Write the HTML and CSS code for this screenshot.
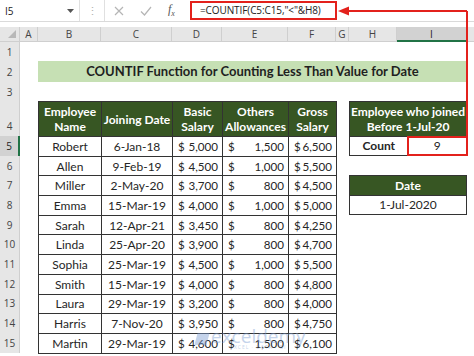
FILE: index.html
```html
<!DOCTYPE html>
<html lang="en">
<head>
    <meta charset="UTF-8">
    <meta name="viewport" content="width=device-width, initial-scale=1.0">
    <title>COUNTIF Less Than Date</title>
    <link rel="stylesheet" href="styles.css">
</head>
<body>
    <div class="formula-bar">
        <div class="name-box">
            <span>I5</span>
            <svg class="drop" width="7" height="4" viewBox="0 0 7 4"><path d="M0 0h7L3.5 4z" fill="#555"/></svg>
        </div>
        <div class="bar-dots">&#8942;</div>
        <div class="bar-icons">
            <svg width="10" height="10" viewBox="0 0 10 10"><path d="M1 1l8 8M9 1l-8 8" stroke="#b5b5b5" stroke-width="1.2"/></svg>
            <svg width="12" height="10" viewBox="0 0 12 10"><path d="M1 5.5l3.5 3.5L11 1" stroke="#b5b5b5" stroke-width="1.2" fill="none"/></svg>
            <span class="fx">f<sub>x</sub></span>
        </div>
        <div class="formula">=COUNTIF(C5:C15,"&lt;"&amp;H8)</div>
    </div>

    <div class="sheet">
        <div class="corner"><svg width="8" height="8" viewBox="0 0 8 8"><path d="M8 0v8H0z" fill="#b8b8b8"/></svg></div>
        <div class="ch">A</div>
        <div class="ch">B</div>
        <div class="ch">C</div>
        <div class="ch">D</div>
        <div class="ch">E</div>
        <div class="ch">F</div>
        <div class="ch">G</div>
        <div class="ch">H</div>
        <div class="ch active">I</div>
        <div class="ch last"></div>

        <div class="row-heads">
            <div class="rh">1</div>
            <div class="rh tall">2</div>
            <div class="rh">3</div>
            <div class="rh double">4</div>
            <div class="rh active">5</div>
            <div class="rh">6</div>
            <div class="rh">7</div>
            <div class="rh">8</div>
            <div class="rh">9</div>
            <div class="rh">10</div>
            <div class="rh">11</div>
            <div class="rh">12</div>
            <div class="rh">13</div>
            <div class="rh">14</div>
            <div class="rh">15</div>
        </div>

        <div class="title">COUNTIF Function for Counting Less Than Value for Date</div>

        <table class="data main">
            <colgroup>
                <col style="width:63px"><col style="width:71px"><col style="width:50px"><col style="width:66px"><col style="width:48px">
            </colgroup>
            <thead>
                <tr>
                    <th>Employee<br>Name</th>
                    <th>Joining Date</th>
                    <th>Basic<br>Salary</th>
                    <th>Others<br>Allowances</th>
                    <th>Gross<br>Salary</th>
                </tr>
            </thead>
            <tbody id="rows"></tbody>
        </table>

        <table class="data count">
            <tr><th colspan="2">Employee who joined<br>Before 1-Jul-20</th></tr>
            <tr><td class="label">Count</td><td class="result">9</td></tr>
        </table>

        <table class="data date">
            <tr><th colspan="2">Date</th></tr>
            <tr><td colspan="2">1-Jul-2020</td></tr>
        </table>
    </div>

    <div class="watermark">
        <span class="wm-logo"></span>
        <span class="wm-text">exceldemy<small>EXCEL · DATA · BI</small></span>
    </div>

    <svg class="arrow" width="474" height="160" viewBox="0 0 474 160">
        <path d="M467 11V136M467 11H348" stroke="#e3211c" stroke-width="2" fill="none"/>
        <path d="M338 11l11-4.5v9z" fill="#e3211c"/>
    </svg>

    <script>
        const employees = [
            ['Robert', '6-Jan-18', '5,000', '1,500', '6,500'],
            ['Allen', '9-Feb-19', '4,500', '1,000', '5,500'],
            ['Miller', '2-May-20', '3,700', '800', '4,500'],
            ['Emma', '15-Mar-19', '4,000', '1,000', '5,000'],
            ['Sarah', '12-Apr-21', '3,450', '800', '4,250'],
            ['Linda', '25-Apr-20', '3,900', '800', '4,700'],
            ['Sophia', '25-Mar-19', '4,500', '1,000', '5,500'],
            ['Smith', '15-Mar-19', '4,000', '800', '4,800'],
            ['Laura', '29-Mar-19', '3,200', '800', '4,000'],
            ['Harris', '7-Nov-20', '3,950', '800', '4,750'],
            ['Martin', '29-Mar-19', '4,600', '1,500', '6,100']
        ];

        const tbody = document.getElementById('rows');
        employees.forEach(emp => {
            const tr = document.createElement('tr');
            emp.forEach((value, i) => {
                const td = document.createElement('td');
                if (i >= 2) {
                    td.innerHTML = `<div class="acct"><span>$</span><span>${value}</span></div>`;
                } else {
                    td.textContent = value;
                }
                tr.appendChild(td);
            });
            tbody.appendChild(tr);
        });
    </script>
</body>
</html>
```

FILE: styles.css
```css
body {
    margin: 0;
    padding: 0;
    width: 474px;
    height: 356px;
    overflow: hidden;
    background-color: #fff;
    font-family: Lato, "Open Sans", sans-serif;
    color: #262626;
    position: relative;
}

/* formula bar */
.formula-bar {
    display: flex;
    height: 21px;
    background: #fff;
    border-bottom: 1px solid #dadada;
    font-family: "Open Sans", "Noto Sans", sans-serif;
    font-size: 10px;
    color: #222;
}
.name-box {
    width: 80px;
    display: flex;
    align-items: center;
    justify-content: space-between;
    padding: 0 5px;
    box-sizing: border-box;
    border-right: 1px solid #e0e0e0;
}
.bar-dots {
    width: 24px;
    text-align: center;
    line-height: 21px;
    color: #b0b0b0;
    font-size: 11px;
}
.bar-icons {
    display: flex;
    align-items: center;
    gap: 16px;
    padding-left: 9px;
    width: 86px;
    box-sizing: border-box;
    border-left: 1px solid #e0e0e0;
}
.fx {
    font-family: "Liberation Serif", serif;
    font-style: italic;
    font-size: 12px;
    color: #555;
}
.fx sub {
    font-size: 8px;
}
.formula {
    margin-top: 1px;
    width: 147px;
    height: 19px;
    box-sizing: border-box;
    border: 2px solid #e3211c;
    padding-left: 8px;
    line-height: 15px;
    letter-spacing: -0.1px;
}

/* sheet */
.sheet {
    margin-top: 5px;
    display: grid;
    grid-template-columns: 20px 18px 63px 71px 50px 66px 48px 13px 48px 70px 1fr;
    grid-template-rows: 15px 19px 21px 19px 35px repeat(11, 19.7px);
}
.corner {
    background: #e6e6e6;
    border-right: 1px solid #cfcfcf;
    border-bottom: 1px solid #cfcfcf;
    display: flex;
    align-items: flex-end;
    justify-content: flex-end;
    padding: 0 3px 3px 0;
}
.ch {
    background: #e6e6e6;
    border-right: 1px solid #cfcfcf;
    border-bottom: 1px solid #cfcfcf;
    font-family: "Open Sans", sans-serif;
    font-size: 10px;
    color: #444;
    text-align: center;
    line-height: 14px;
}
.ch.active {
    background: #d2d2d2;
    border-bottom: 2px solid #217346;
    color: #222;
}
.ch.last {
    border-right: none;
}
.row-heads {
    grid-column: 1;
    grid-row: 2 / 17;
    display: flex;
    flex-direction: column;
}
.rh {
    height: 19.7px;
    flex: none;
    background: #e6e6e6;
    border-right: 1px solid #cfcfcf;
    box-sizing: border-box;
    font-family: "Open Sans", sans-serif;
    font-size: 10px;
    color: #444;
    text-align: center;
    display: flex;
    align-items: center;
    justify-content: center;
}
.rh:nth-child(1) { height: 19px; }
.rh:nth-child(3) { height: 19px; }
.rh.tall { height: 21px; }
.rh.double { height: 35px; align-items: flex-end; padding-bottom: 3px; }
.rh.active {
    background: #d2d2d2;
    border-right: 2px solid #217346;
    color: #222;
}

.title {
    grid-column: 3 / 11;
    grid-row: 3;
    background: #c6e0b4;
    font-weight: bold;
    font-size: 13px;
    text-align: center;
    line-height: 21px;
    color: #1f1f1f;
}

/* tables */
.data {
    border-collapse: collapse;
    table-layout: fixed;
    width: 100%;
    height: 100%;
    font-size: 12px;
}
.data th,
.data td {
    border: 1px solid #333;
    padding: 0;
    text-align: center;
    white-space: nowrap;
    overflow: hidden;
}
.data th {
    background: #375623;
    color: #fff;
    font-weight: bold;
    line-height: 15px;
}
.main {
    grid-column: 3 / 8;
    grid-row: 5 / 17;
}
.main thead tr {
    height: 35px;
}
.main tbody tr {
    height: 19.7px;
}
.acct {
    display: flex;
    justify-content: space-between;
    padding: 0 4px 0 5px;
    font-size: 11.6px;
}
.count {
    grid-column: 9 / 11;
    grid-row: 5 / 7;
}
.count tr:first-child {
    height: 35px;
}
.count .label {
    font-weight: bold;
}
.count .result {
    outline: 2px solid #e3211c;
    outline-offset: -1px;
}
.date {
    grid-column: 9 / 11;
    grid-row: 8 / 10;
}

/* overlays */
.arrow {
    position: absolute;
    left: 0;
    top: 0;
    pointer-events: none;
}
.watermark {
    position: absolute;
    left: 196px;
    top: 328px;
    display: flex;
    align-items: center;
    gap: 3px;
    opacity: 0.45;
    pointer-events: none;
}
.wm-logo {
    width: 12px;
    height: 12px;
    background: #7d9fd3;
    transform: skewX(-15deg);
}
.wm-text {
    font-family: "Open Sans", sans-serif;
    font-size: 19px;
    line-height: 16px;
    color: #7d9fd3;
    display: flex;
    flex-direction: column;
}
.wm-text small {
    font-size: 5px;
    line-height: 6px;
    letter-spacing: 1px;
    text-align: center;
}
```
